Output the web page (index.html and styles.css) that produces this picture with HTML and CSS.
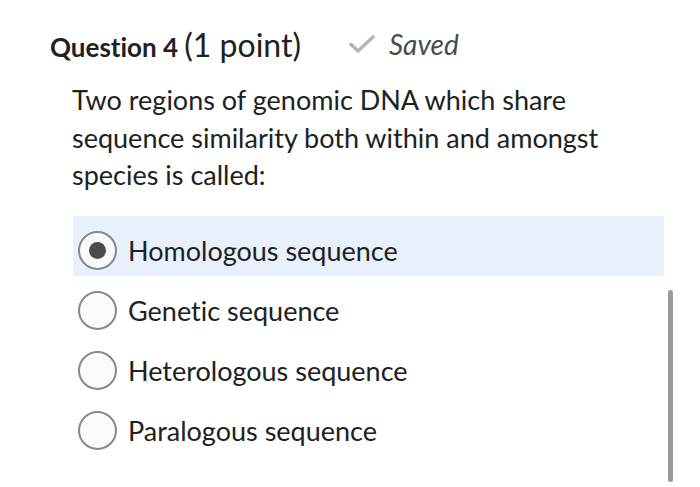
FILE: index.html
```html
<!DOCTYPE html>
<html>
<head>
<meta charset="utf-8">
<link rel="stylesheet" href="styles.css">
</head>
<body>
<div class="page">
  <div class="header">
    <h2 class="title"><span class="q">Question 4</span> <span class="pts">(1 point)</span></h2>
    <div class="saved">
      <svg class="check" width="26" height="18" viewBox="0 0 26 18"><path d="M2 9.5 L9 16 L24 2" fill="none" stroke="#b3b6b9" stroke-width="3.6" stroke-linecap="round" stroke-linejoin="round"/></svg>
      <span>Saved</span>
    </div>
  </div>
  <p class="prompt">Two regions of genomic DNA which share sequence similarity both within and amongst species is called:</p>
  <div class="options">
    <label class="opt selected"><span class="radio"><span class="dot"></span></span><span class="lbl">Homologous sequence</span></label>
    <label class="opt"><span class="radio"></span><span class="lbl">Genetic sequence</span></label>
    <label class="opt"><span class="radio"></span><span class="lbl">Heterologous sequence</span></label>
    <label class="opt"><span class="radio"></span><span class="lbl">Paralogous sequence</span></label>
  </div>
  <div class="scrollbar"></div>
</div>
</body>
</html>
```
FILE: styles.css
```css
html, body { margin: 0; padding: 0; background: #fff; }
body { font-family: Lato, "Noto Sans", sans-serif; color: #202122; width: 700px; height: 487px; overflow: hidden; font-variant-ligatures: no-common-ligatures; }
.page { position: relative; padding: 25px 0 0 50px; }
.header { display: flex; align-items: center; gap: 48px; height: 38px; }
.title { margin: 0; font-weight: normal; color: #202122; white-space: nowrap; }
.q { font-weight: 700; font-size: 26px; }
.pts { font-size: 32px; }
.saved { display: flex; align-items: center; gap: 14px; font-style: italic; font-size: 28px; color: #494c4e; }
.check { display: block; }
.prompt { margin: 18px 0 0 22px; width: 560px; font-size: 27px; line-height: 37.5px; color: #202122; }
.options { margin: 22px 0 0 23px; width: 591px; display: flex; flex-direction: column; }
.opt { display: flex; align-items: center; box-sizing: border-box; height: 60px; padding: 10px 0 0 5px; gap: 11px; font-size: 27px; color: #202122; }
.opt.selected { background: #e8f0fc; }
.radio { width: 35px; height: 35px; border: 2px solid #868a8d; border-radius: 50%; background: #f9fafb; display: flex; align-items: center; justify-content: center; flex: none; }
.dot { width: 17px; height: 17px; border-radius: 50%; background: #494c4e; }
.scrollbar { position: absolute; left: 668px; top: 290px; width: 5px; height: 192px; background: #9b9b9b; border-radius: 3px; }
```
